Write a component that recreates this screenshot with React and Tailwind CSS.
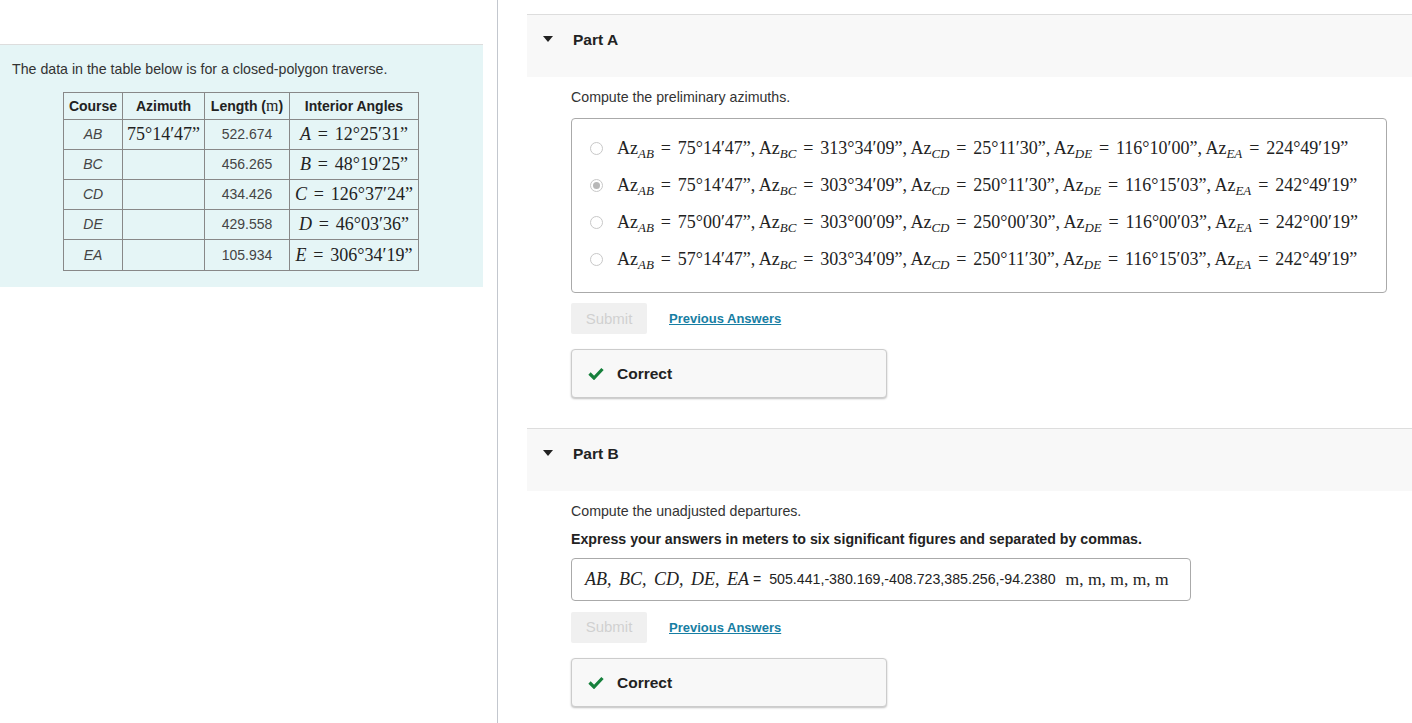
import React from "react";

const sans = { fontFamily: '"Liberation Sans", Arial, sans-serif' };

const rows = [
  { c: "AB", az: "75°14′47”", len: "522.674", v: "A", ang: "12°25′31”" },
  { c: "BC", az: "", len: "456.265", v: "B", ang: "48°19′25”" },
  { c: "CD", az: "", len: "434.426", v: "C", ang: "126°37′24”" },
  { c: "DE", az: "", len: "429.558", v: "D", ang: "46°03′36”" },
  { c: "EA", az: "", len: "105.934", v: "E", ang: "306°34′19”" },
];

const options = [
  ["75°14′47”", "313°34′09”", "25°11′30”", "116°10′00”", "224°49′19”"],
  ["75°14′47”", "303°34′09”", "250°11′30”", "116°15′03”", "242°49′19”"],
  ["75°00′47”", "303°00′09”", "250°00′30”", "116°00′03”", "242°00′19”"],
  ["57°14′47”", "303°34′09”", "250°11′30”", "116°15′03”", "242°49′19”"],
];
const names = ["AB", "BC", "CD", "DE", "EA"];

const Serif = ({ children, className = "" }) => (
  <span className={"font-['Liberation_Serif',serif] " + className}>{children}</span>
);

const Eq = () => <span className="mx-[0.38em]">=</span>;

const PartHeader = ({ label }) => (
  <div className="flex h-[63px] items-start border-t border-[#dddddd] bg-[#f8f8f8] pt-[13px]">
    <svg width="12" height="8" viewBox="0 0 12 8" className="ml-[15px] mt-[7px]">
      <path d="M1 1 L11 1 L6 7 Z" fill="#222" />
    </svg>
    <span className="ml-[19px] text-[15.5px] font-bold text-[#222]">{label}</span>
  </div>
);

const SubmitRow = () => (
  <div className="flex items-center">
    <button className="h-[31px] w-[76px] rounded-[2px] bg-[#f0f0f0] text-[15px] text-[#d0d0d0]">Submit</button>
    <a className="ml-[22px] text-[13px] font-bold text-[#177ea3] underline">Previous Answers</a>
  </div>
);

const Correct = () => (
  <div className="flex h-[49px] w-[316px] items-center rounded-[4px] border border-[#cccccc] bg-[#f8f8f8] shadow-[0_1px_2px_rgba(0,0,0,0.25)]">
    <svg width="16" height="13" viewBox="0 0 16 13" className="ml-[16px]">
      <path d="M1.5 6.5 L6 11 L14.5 2" stroke="#16803c" strokeWidth="3.2" fill="none" />
    </svg>
    <span className="ml-[13px] text-[15.5px] font-bold text-[#222]">Correct</span>
  </div>
);

const Radio = ({ checked }) => (
  <span className="flex h-[13px] w-[13px] shrink-0 items-center justify-center rounded-full border border-[#c8c8c8] bg-white">
    {checked && <span className="h-[7px] w-[7px] rounded-full bg-[#b8b8b8]" />}
  </span>
);

export default function App() {
  return (
    <div className="flex h-[723px] w-[1412px] overflow-hidden bg-white text-[#333]" style={sans}>
      {/* left column */}
      <div className="w-[497px] shrink-0 pr-[14px] pt-[44px]">
        <div className="h-[243px] border-t border-[#dddddd] bg-[#e5f5f6] pl-[12px] pt-[14px]">
          <p className="text-[14.2px] text-[#333]">The data in the table below is for a closed-polygon traverse.</p>
          <table className="ml-[51px] mt-[12px] border-collapse border border-[#888] text-[14px]">
            <thead>
              <tr className="h-[27px]">
                <th className="w-[59px] border border-[#888] px-[2px] text-[14px] font-bold text-[#222]">Course</th>
                <th className="w-[82px] border border-[#888] text-[14px] font-bold text-[#222]">Azimuth</th>
                <th className="w-[85px] border border-[#888] text-[14px] font-bold text-[#222]">
                  Length (<Serif className="text-[16px] font-normal">m</Serif>)
                </th>
                <th className="w-[129px] border border-[#888] text-[14px] font-bold text-[#222]">Interior Angles</th>
              </tr>
            </thead>
            <tbody>
              {rows.map((r, i) => (
                <tr key={r.c} className={i === 4 ? "h-[31px]" : "h-[30px]"}>
                  <td className="border border-[#888] text-center italic text-[#444]">{r.c}</td>
                  <td className="border border-[#888] text-center">
                    <Serif className="text-[18px] text-[#222]">{r.az}</Serif>
                  </td>
                  <td className="border border-[#888] text-center text-[#444]">{r.len}</td>
                  <td className="border border-[#888] text-center">
                    <Serif className="whitespace-nowrap text-[18px] text-[#222]">
                      <i>{r.v}</i>
                      <Eq />
                      {r.ang}
                    </Serif>
                  </td>
                </tr>
              ))}
            </tbody>
          </table>
        </div>
      </div>

      {/* right column */}
      <div className="flex-1 border-l border-[#c3c7ce] pl-[29px] pt-[14px]">
        <PartHeader label="Part A" />
        <div className="pl-[44px]">
          <p className="mt-[10px] text-[14.2px] text-[#333]">Compute the preliminary azimuths.</p>
          <div className="mt-[10px] w-[816px] rounded-[4px] border border-[#aaaaaa] pb-[14px] pt-[11px]">
            {options.map((o, i) => (
              <div key={i} className="flex h-[37px] items-center pl-[18px]">
                <Radio checked={i === 1} />
                <Serif className="ml-[14px] whitespace-nowrap text-[18px] text-[#222]">
                  {o.map((v, j) => (
                    <span key={j}>
                      Az<sub className="text-[13px] italic">{names[j]}</sub>
                      <Eq />
                      {v}
                      {j < 4 ? ", " : ""}
                    </span>
                  ))}
                </Serif>
              </div>
            ))}
          </div>
          <div className="mt-[10px]">
            <SubmitRow />
          </div>
          <div className="mt-[15px]">
            <Correct />
          </div>
        </div>

        <div className="mt-[30px]">
          <PartHeader label="Part B" />
        </div>
        <div className="pl-[44px]">
          <p className="mt-[10px] text-[14.2px] text-[#333]">Compute the unadjusted departures.</p>
          <p className="mt-[6px] text-[14.2px] font-bold text-[#222]">
            Express your answers in meters to six significant figures and separated by commas.
          </p>
          <div className="mt-[8px] flex h-[43px] w-[620px] items-center rounded-[4px] border border-[#aaaaaa] pl-[13px]">
            <Serif className="whitespace-nowrap text-[18px] italic text-[#222] [word-spacing:3px]">AB, BC, CD, DE, EA</Serif>
            <span className="ml-[4px] text-[14px] text-[#222]">=</span>
            <span className="ml-[8px] text-[14.2px] text-[#222]">505.441,-380.169,-408.723,385.256,-94.2380</span>
            <Serif className="ml-[10px] whitespace-nowrap text-[17.5px] text-[#222]">m, m, m, m, m</Serif>
          </div>
          <div className="mt-[11px]">
            <SubmitRow />
          </div>
          <div className="mt-[15px]">
            <Correct />
          </div>
        </div>
      </div>
    </div>
  );
}
